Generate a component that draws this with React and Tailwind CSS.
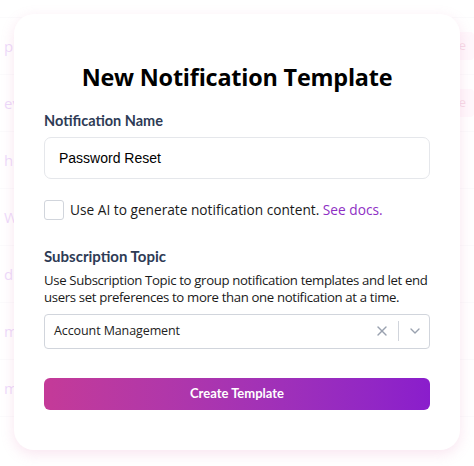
import { X, ChevronDown } from "lucide-react";

const rows = ["ple", "ev", "he", "W", "d A", "mp", "mp"];

export default function App() {
  return (
    <div className="relative w-[474px] h-[466px] overflow-hidden bg-white font-['Open_Sans',sans-serif]">
      {/* page behind the modal */}
      <div className="pt-[17px] flex flex-col">
        {rows.map((r, i) => (
          <div key={i} className="h-[57px] border-t border-gray-200 flex items-center justify-between pl-1 text-[15px] text-purple-700">
            <span>{r}</span>
            {i < 2 && <span className="bg-pink-200 text-pink-700 text-[13px] px-2 py-1 rounded">Here</span>}
          </div>
        ))}
        <div className="border-t border-gray-200"></div>
      </div>
      <div className="absolute inset-0 bg-white/85"></div>

      {/* modal */}
      <div className="absolute left-[14px] top-[14px] w-[446px] h-[436px] bg-white rounded-[20px] shadow-[0_4px_14px_rgba(219,112,170,0.18)] px-[30px] pt-[48px]">
        <h1 className="text-[23.4px] font-bold text-black text-center leading-[30px] tracking-[-0.2px]">New Notification Template</h1>

        <label className="block mt-[19px] font-['Lato',sans-serif] text-[14.5px] font-bold text-[#2e3b55] leading-[20px]">Notification Name</label>
        <div className="mt-[6px] h-[42px] border border-gray-200 rounded-[7px] flex items-center px-[14px] font-['Liberation_Sans',sans-serif] text-[14px] text-black">
          Password Reset
        </div>

        <div className="mt-[21px] flex items-center gap-[6px]">
          <div className="w-[20px] h-[20px] border border-gray-300 rounded-[3px]"></div>
          <span className="text-[13.7px] text-[#1a1a1a]">
            Use AI to generate notification content. <span className="text-[#8e2fc4]">See docs.</span>
          </span>
        </div>

        <label className="block mt-[25px] font-['Lato',sans-serif] text-[15px] font-bold text-[#2e3b55] leading-[20px]">Subscription Topic</label>
        <p className="mt-[6px] text-[13.2px] leading-[17px] text-[#1a1a1a] tracking-[-0.35px]">
          Use Subscription Topic to group notification templates and let end users set preferences to more than one notification at a time.
        </p>
        <div className="mt-[8px] h-[35px] border border-gray-300 rounded-[4px] flex items-center pl-[9px] pr-[6px] text-[12.5px] text-[#222] tracking-[-0.1px]">
          <span className="flex-1">Account Management</span>
          <X className="w-[16px] h-[16px] text-gray-400" strokeWidth={2} />
          <span className="mx-[8px] w-px h-[20px] bg-gray-300"></span>
          <ChevronDown className="w-[16px] h-[16px] text-gray-400" strokeWidth={2} />
        </div>

        <button className="mt-[29px] w-full h-[32px] rounded-[6px] bg-gradient-to-r from-[#c43a98] to-[#8a1dcc] text-white font-['Lato',sans-serif] text-[13px] font-bold">
          Create Template
        </button>
      </div>
    </div>
  );
}
